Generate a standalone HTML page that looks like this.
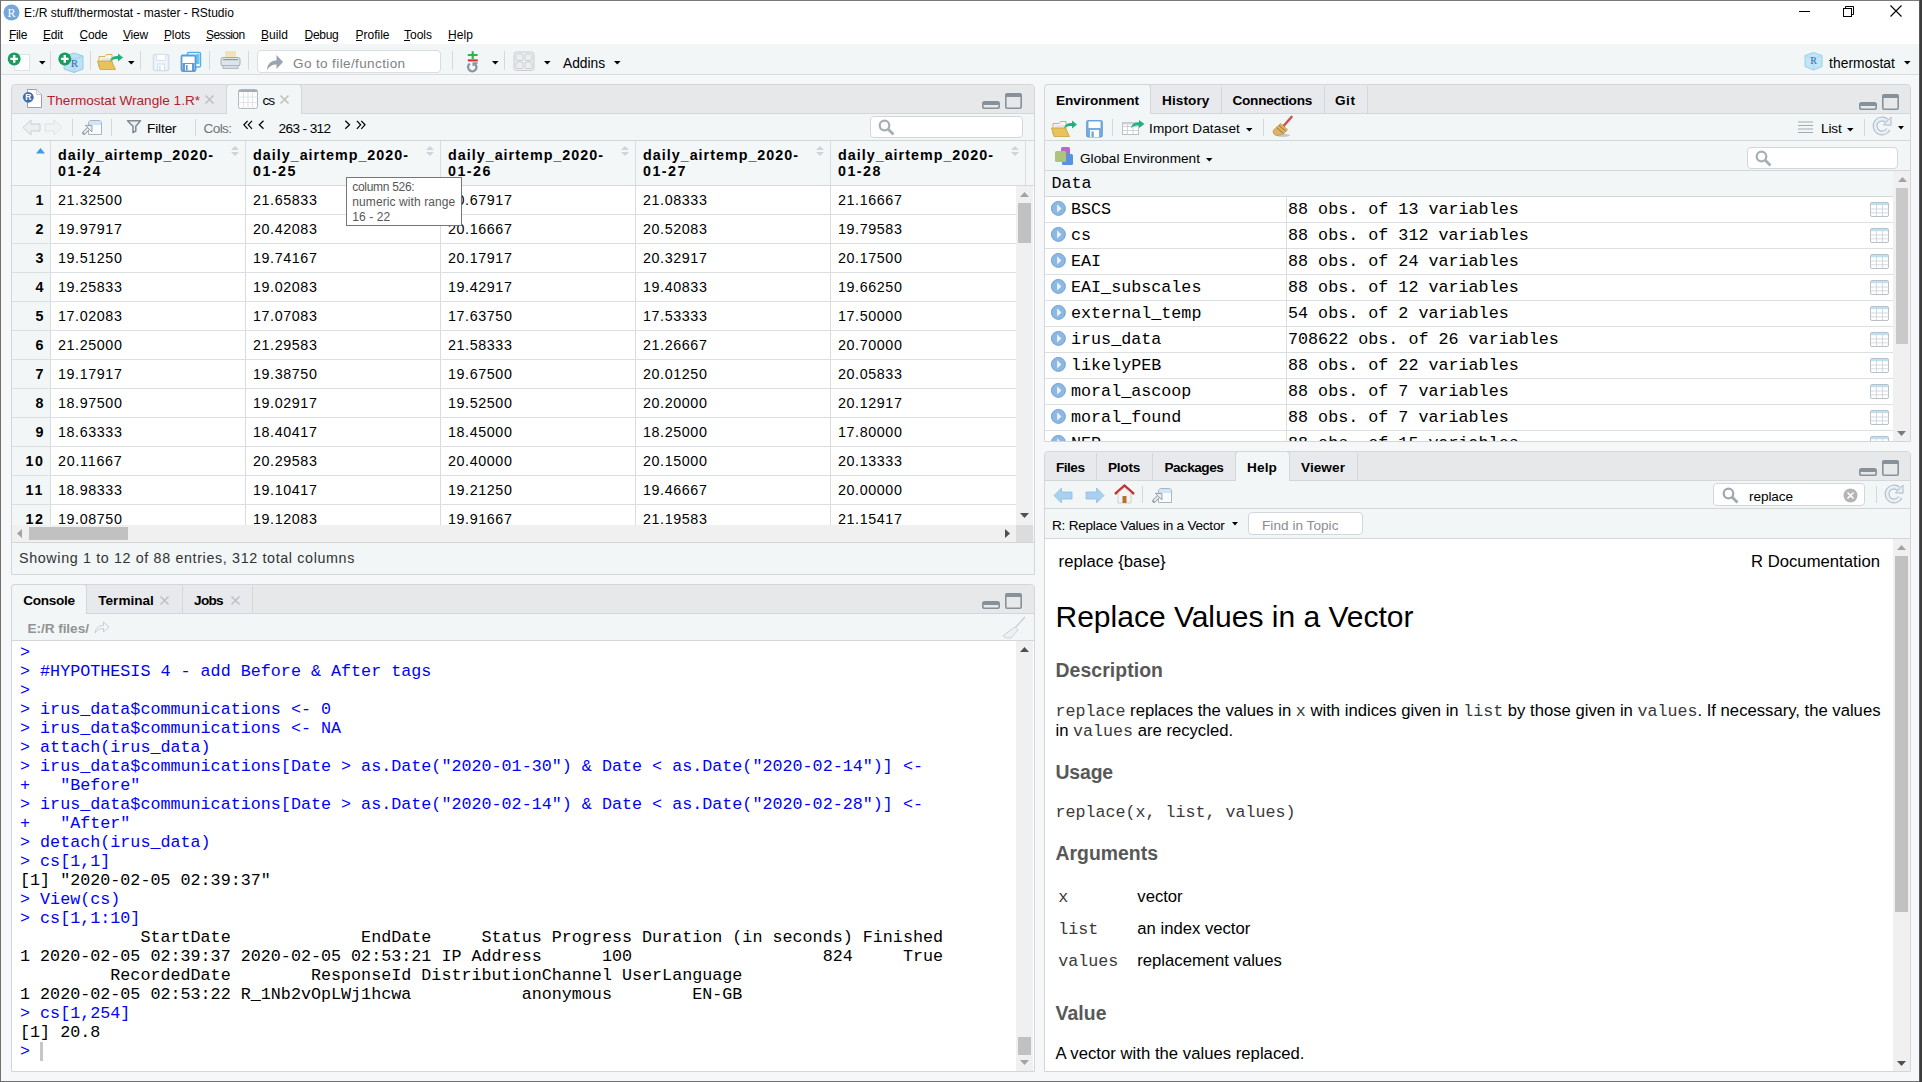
<!DOCTYPE html>
<html><head><meta charset="utf-8"><title>RStudio</title>
<style>
html,body{margin:0;padding:0;width:1922px;height:1082px;overflow:hidden;background:#fff;}
body{position:relative;font-family:"Liberation Sans",sans-serif;}
body div{position:absolute;box-sizing:border-box;}
.t{white-space:pre;}
svg{position:absolute;overflow:visible;}

</style></head><body>
<div style="left:0px;top:0px;width:1922px;height:1082px;background:#f5f7f8"></div>
<div style="left:0px;top:0px;width:1922px;height:44px;background:#fff"></div>
<div class="t" style="left:24.00px;top:5.84px;font-family:'Liberation Sans';font-size:12px;line-height:14px;color:#000;">E:/R stuff/thermostat - master - RStudio</div>
<svg style="left:3px;top:4px" width="17" height="17" viewBox="0 0 17 17"><circle cx="8.5" cy="8.5" r="8" fill="#75a7d8"/><text x="8.5" y="12.6" text-anchor="middle" font-family="Liberation Serif" font-size="12" fill="#fff">R</text></svg>
<div style="left:1799px;top:11px;width:11px;height:1px;background:#000"></div>
<svg style="left:1843px;top:6px" width="13" height="11" viewBox="0 0 13 11"><rect x="0.5" y="2.5" width="8" height="8" fill="none" stroke="#000"/><path d="M2.5 2.5V0.5H10.5V8.5H8.5" fill="none" stroke="#000"/></svg>
<svg style="left:1890px;top:5px" width="12" height="12" viewBox="0 0 12 12"><path d="M0.5 0.5L11.5 11.5M11.5 0.5L0.5 11.5" stroke="#000" stroke-width="1.1"/></svg>
<div class="t" style="left:9.00px;top:27.84px;font-family:'Liberation Sans';font-size:12px;line-height:14px;color:#000;letter-spacing:-0.336px;">File</div>
<div style="left:9px;top:40px;width:6px;height:1px;background:#000"></div>
<div class="t" style="left:43.00px;top:27.84px;font-family:'Liberation Sans';font-size:12px;line-height:14px;color:#000;letter-spacing:-0.172px;">Edit</div>
<div style="left:43px;top:40px;width:6px;height:1px;background:#000"></div>
<div class="t" style="left:79.50px;top:27.84px;font-family:'Liberation Sans';font-size:12px;line-height:14px;color:#000;letter-spacing:-0.172px;">Code</div>
<div style="left:79.5px;top:40px;width:7px;height:1px;background:#000"></div>
<div class="t" style="left:123.00px;top:27.84px;font-family:'Liberation Sans';font-size:12px;line-height:14px;color:#000;letter-spacing:-0.199px;">View</div>
<div style="left:123px;top:40px;width:6px;height:1px;background:#000"></div>
<div class="t" style="left:164.00px;top:27.84px;font-family:'Liberation Sans';font-size:12px;line-height:14px;color:#000;letter-spacing:-0.138px;">Plots</div>
<div style="left:164px;top:40px;width:6px;height:1px;background:#000"></div>
<div class="t" style="left:206.00px;top:27.84px;font-family:'Liberation Sans';font-size:12px;line-height:14px;color:#000;letter-spacing:-0.600px;">Session</div>
<div style="left:206px;top:40px;width:6px;height:1px;background:#000"></div>
<div class="t" style="left:261.00px;top:27.84px;font-family:'Liberation Sans';font-size:12px;line-height:14px;color:#000;letter-spacing:0.062px;">Build</div>
<div style="left:261px;top:40px;width:7px;height:1px;background:#000"></div>
<div class="t" style="left:304.50px;top:27.84px;font-family:'Liberation Sans';font-size:12px;line-height:14px;color:#000;letter-spacing:-0.275px;">Debug</div>
<div style="left:304.5px;top:40px;width:7px;height:1px;background:#000"></div>
<div class="t" style="left:355.50px;top:27.84px;font-family:'Liberation Sans';font-size:12px;line-height:14px;color:#000;">Profile</div>
<div style="left:355.5px;top:40px;width:6px;height:1px;background:#000"></div>
<div class="t" style="left:404.00px;top:27.84px;font-family:'Liberation Sans';font-size:12px;line-height:14px;color:#000;">Tools</div>
<div style="left:404px;top:40px;width:6px;height:1px;background:#000"></div>
<div class="t" style="left:448.00px;top:27.84px;font-family:'Liberation Sans';font-size:12px;line-height:14px;color:#000;letter-spacing:0.078px;">Help</div>
<div style="left:448px;top:40px;width:7px;height:1px;background:#000"></div>
<div style="left:0px;top:44px;width:1922px;height:30px;background:#f2f6f7"></div>
<div style="left:0px;top:74px;width:1922px;height:1px;background:#d8dcdf"></div>
<div style="left:50px;top:51px;width:1px;height:19px;background:#d5d9dc"></div>
<div style="left:90px;top:51px;width:1px;height:19px;background:#d5d9dc"></div>
<div style="left:140px;top:51px;width:1px;height:19px;background:#d5d9dc"></div>
<div style="left:209px;top:51px;width:1px;height:19px;background:#d5d9dc"></div>
<div style="left:248px;top:51px;width:1px;height:19px;background:#d5d9dc"></div>
<div style="left:452px;top:51px;width:1px;height:19px;background:#d5d9dc"></div>
<div style="left:504px;top:51px;width:1px;height:19px;background:#d5d9dc"></div>
<svg style="left:7px;top:51px" width="25" height="22" viewBox="0 0 25 22"><rect x="7.5" y="3.5" width="15" height="16" fill="#fff" stroke="#dfe3e8"/><circle cx="7.2" cy="7.9" r="6.5" fill="#14a05c"/><path d="M3.4000000000000004 7.9H11.0M7.2 4.1000000000000005V11.7" stroke="#fff" stroke-width="2.4"/></svg>
<svg style="left:38.5px;top:60.5px" width="6.6" height="3.6" viewBox="0 0 6.6 3.6"><path d="M0 0H6.6L3.3 3.6Z" fill="#000"/></svg>
<svg style="left:57px;top:51px" width="28" height="23" viewBox="0 0 28 23"><path d="M7 5L17 2L26 5V18L17 21.5L7 18Z" fill="#bfe0f5" stroke="#7fc4e8" stroke-width="0.8"/><path d="M7 5L17 8.5L26 5M17 8.5V21.5" fill="none" stroke="#8fcbea" stroke-width="0.7"/><text x="17.5" y="16" text-anchor="middle" font-family="Liberation Serif" font-size="11" fill="#2d6fb8">R</text><circle cx="7.8" cy="7.9" r="6.5" fill="#14a05c"/><path d="M4.0 7.9H11.6M7.8 4.1000000000000005V11.7" stroke="#fff" stroke-width="2.4"/></svg>
<svg style="left:97px;top:52px" width="28" height="19" viewBox="0 0 28 19"><path d="M2 4.5H8L9.5 2.5H15V15H2Z" fill="#f6f6f6" stroke="#d2aa3e" stroke-width="0.9"/><path d="M4 6H14V15H4Z" fill="#e6e6e6"/><path d="M0.5 9H14.5L18.5 17.5H3Z" fill="#e8c25a" stroke="#c9a23a" stroke-width="0.8"/><path d="M13 9.5C14 5 17 4 21 4V1.5L26 5.5L21 9.5V7C17.5 7 15 7.5 13 9.5Z" fill="#1fb17f"/></svg>
<svg style="left:128px;top:60.5px" width="6.6" height="3.6" viewBox="0 0 6.6 3.6"><path d="M0 0H6.6L3.3 3.6Z" fill="#000"/></svg>
<svg style="left:152px;top:53px" width="18" height="18" viewBox="0 0 18 18"><rect x="1.5" y="1.5" width="15" height="16" rx="1.5" fill="#f2f6fa" stroke="#d0e0ef" stroke-width="1.6"/><rect x="4.5" y="1.5" width="9" height="6" fill="#fff" stroke="#d6e4f0"/><rect x="5.5" y="11" width="7" height="6.5" fill="#fff" stroke="#d0e0ef"/><rect x="7" y="12.5" width="1.6" height="5" fill="#d0e0ef"/></svg>
<svg style="left:180px;top:51px" width="23" height="21" viewBox="0 0 23 21"><rect x="7.5" y="1.5" width="13" height="14.5" rx="1.2" fill="#fff" stroke="#4bb4e6" stroke-width="1.4"/><rect x="16" y="3" width="3.5" height="10" fill="#6cc4ee"/><rect x="1.5" y="4.5" width="14" height="15.5" rx="1.2" fill="#fff" stroke="#5b9bd8" stroke-width="1.8"/><rect x="2.5" y="12" width="12" height="7.5" fill="#5b9bd8"/><rect x="5" y="13" width="7" height="6.5" fill="#fff"/><rect x="6" y="14" width="1.6" height="5.5" fill="#5b9bd8"/></svg>
<svg style="left:220px;top:50px" width="21" height="20" viewBox="0 0 21 20"><rect x="5" y="1" width="11" height="10" fill="#f1e3b8"/><rect x="1" y="7.5" width="19" height="8.5" rx="2" fill="#dfe4ea" stroke="#9aa5b1" stroke-width="0.9"/><rect x="3" y="9" width="15" height="1.2" fill="#8c98a5"/><rect x="3" y="15.5" width="15" height="3" fill="#d7dde4" stroke="#a7b0ba" stroke-width="0.8"/></svg>
<div style="left:257px;top:50px;width:184px;height:23px;background:#fff;border:1px solid #d9dde0;border-radius:4px"></div>
<svg style="left:266px;top:54px" width="18" height="17" viewBox="0 0 18 17"><path d="M1 16C1.5 9 5.5 6.5 10.5 6.5V1L17 8L10.5 15V10.5C6 10.5 3 12.5 1 16Z" fill="#9aa4ae"/></svg>
<div class="t" style="left:293.00px;top:55.82px;font-family:'Liberation Sans';font-size:13.5px;line-height:16px;color:#808285;letter-spacing:0.391px;">Go to file/function</div>
<svg style="left:466px;top:50px" width="13" height="23" viewBox="0 0 13 23"><path d="M1.8 5H11.6M6.7 1.2V9" stroke="#2fb34a" stroke-width="2.1"/><rect x="1.8" y="9.4" width="10" height="2" fill="#dd2a22"/><path d="M3.9 13.6A4.2 4.2 0 1 0 8.7 13.7" fill="none" stroke="#8896a3" stroke-width="2.3"/><path d="M6.5 12.3H11.8L11.3 14H8.4V16H6.5Z" fill="#8896a3"/></svg>
<svg style="left:491.5px;top:61px" width="6.6" height="3.6" viewBox="0 0 6.6 3.6"><path d="M0 0H6.6L3.3 3.6Z" fill="#000"/></svg>
<svg style="left:513px;top:51px" width="22" height="20" viewBox="0 0 22 20"><rect x="1" y="1" width="20" height="18.5" rx="2.5" fill="#eef0f2" stroke="#c8ccd0"/><rect x="3" y="3" width="7" height="6.5" rx="1" fill="#eceef0" stroke="#c4c8cc" stroke-width="0.8"/><rect x="12" y="3" width="7" height="6.5" rx="1" fill="#eceef0" stroke="#c4c8cc" stroke-width="0.8"/><rect x="3" y="11" width="7" height="6.5" rx="1" fill="#eceef0" stroke="#c4c8cc" stroke-width="0.8"/><rect x="12" y="11" width="7" height="6.5" rx="1" fill="#eceef0" stroke="#c4c8cc" stroke-width="0.8"/></svg>
<svg style="left:543.5px;top:61px" width="6.6" height="3.6" viewBox="0 0 6.6 3.6"><path d="M0 0H6.6L3.3 3.6Z" fill="#000"/></svg>
<div class="t" style="left:563.00px;top:54.72px;font-family:'Liberation Sans';font-size:13.8px;line-height:17px;color:#000;letter-spacing:-0.031px;">Addins</div>
<svg style="left:613.5px;top:61px" width="6.6" height="3.6" viewBox="0 0 6.6 3.6"><path d="M0 0H6.6L3.3 3.6Z" fill="#000"/></svg>
<svg style="left:1803px;top:51px" width="21" height="20" viewBox="0 0 21 20"><path d="M2 4.5L10.5 1.5L19 4.5V15.5L10.5 19L2 15.5Z" fill="#c5e4f6" stroke="#86c8ea" stroke-width="0.8"/><path d="M2 4.5L10.5 7.5L19 4.5M10.5 7.5V19" fill="none" stroke="#9ad2ee" stroke-width="0.6"/><text x="10.5" y="12.5" text-anchor="middle" font-family="Liberation Serif" font-size="10" fill="#2d6fb8">R</text></svg>
<div class="t" style="left:1829.00px;top:54.72px;font-family:'Liberation Sans';font-size:13.8px;line-height:17px;color:#000;letter-spacing:0.081px;">thermostat</div>
<svg style="left:1904px;top:61px" width="6.6" height="3.6" viewBox="0 0 6.6 3.6"><path d="M0 0H6.6L3.3 3.6Z" fill="#000"/></svg>
<div style="left:11px;top:84px;width:1024px;height:491px;background:#f2f6f7;border:1px solid #d3d7da;border-radius:4px 4px 0 0"></div>
<div style="left:12px;top:85px;width:1022px;height:28px;background:#e6e8ea;border-radius:3px 3px 0 0"></div>
<div style="left:12px;top:113px;width:1022px;height:1px;background:#d3d7da"></div>
<div style="left:13px;top:85px;width:213px;height:28px;background:#e8e9ec;border-radius:3px 3px 0 0"></div>
<div style="left:226px;top:86px;width:1px;height:27px;background:#d3d7da"></div>
<div style="left:226px;top:84px;width:76px;height:30px;background:#f2f6f7;border:1px solid #d3d7da;border-bottom:none;border-radius:4px 4px 0 0"></div>
<svg style="left:22px;top:88px" width="21" height="21" viewBox="0 0 21 21"><path d="M5.5 1.5H14.5L19.5 6.5V19.5H5.5Z" fill="#fff" stroke="#8e969d" stroke-width="0.9"/><path d="M14.5 1.5V6.5H19.5" fill="#eef0f2" stroke="#b9bfc5" stroke-width="0.8"/><circle cx="6.3" cy="9.3" r="5.4" fill="#3f6fae"/><text x="6.3" y="12.4" text-anchor="middle" font-family="Liberation Sans" font-weight="700" font-size="8.5" fill="#fff">R</text></svg>
<div class="t" style="left:47.00px;top:92.99px;font-family:'Liberation Sans';font-size:13.6px;line-height:16px;color:#b0232a;letter-spacing:-0.005px;">Thermostat Wrangle 1.R*</div>
<svg style="left:205px;top:94.8px" width="9" height="9" viewBox="0 0 9 9"><path d="M0.5 0.5L8.5 8.5M8.5 0.5L0.5 8.5" stroke="#c0c0c0" stroke-width="1.6"/></svg>
<svg style="left:238px;top:89px" width="20" height="20" viewBox="0 0 20 20"><rect x="0.5" y="0.5" width="19" height="19" rx="2" fill="#fdfdfe" stroke="#aeb6be"/><rect x="1" y="1" width="18" height="2" fill="#a3acb5"/><path d="M5.5 3V19.5M10 3V19.5M14.5 3V19.5M0.5 8H19.5M0.5 13.5H19.5" stroke="#dde2e7" stroke-width="0.9"/></svg>
<div class="t" style="left:262.50px;top:92.99px;font-family:'Liberation Sans';font-size:13.6px;line-height:16px;color:#000;letter-spacing:-1.047px;">cs</div>
<svg style="left:280px;top:94.8px" width="9" height="9" viewBox="0 0 9 9"><path d="M0.5 0.5L8.5 8.5M8.5 0.5L0.5 8.5" stroke="#c0c0c0" stroke-width="1.6"/></svg>
<svg style="left:982px;top:101px" width="18" height="8" viewBox="0 0 18 8"><rect x="0.8" y="0.8" width="16.4" height="6.4" rx="1.8" fill="none" stroke="#87919a" stroke-width="1.6"/><rect x="0.8" y="0.8" width="16.4" height="3.2" rx="1.5" fill="#87919a"/></svg>
<svg style="left:1005px;top:93px" width="17" height="16" viewBox="0 0 17 16"><rect x="0.8" y="0.8" width="15.4" height="14.4" rx="1.2" fill="none" stroke="#87919a" stroke-width="1.6"/><rect x="0.8" y="0.8" width="15.4" height="3.2" rx="1" fill="#87919a"/></svg>
<div style="left:12px;top:140px;width:1022px;height:1px;background:#d3d7da"></div>
<svg style="left:22px;top:119px" width="42" height="18" viewBox="0 0 42 18"><path d="M1 8.5L9 1V5H18V12H9V16Z" fill="#eceef0" stroke="#c6cbd0" stroke-width="0.9"/><path d="M40 8.5L32 1V5H23V12H32V16Z" fill="#f0f2f4" stroke="#dde1e4" stroke-width="0.9"/></svg>
<div style="left:72px;top:119px;width:1px;height:17px;background:#d3d7da"></div>
<svg style="left:82px;top:119px" width="21" height="17" viewBox="0 0 21 17"><path d="M6.5 15.5V4A2.5 2.5 0 0 1 9 1.5H17A2.5 2.5 0 0 1 19.5 4V15.5Z" fill="#f8fafc" stroke="#a9b6c1"/><path d="M7 6V4A2 2 0 0 1 9 2H17A2 2 0 0 1 19 4V6Z" fill="#cfe5f9"/><path d="M2 14L7.5 8.5" stroke="#8a98a6" stroke-width="3.8" stroke-linecap="round"/><path d="M2 14L7.5 8.5" stroke="#ececf1" stroke-width="2"/><path d="M3.4 6.4H9.9V12.9Z" fill="#ececf1" stroke="#8a98a6" stroke-width="0.9" stroke-linejoin="round"/></svg>
<div style="left:111px;top:119px;width:1px;height:17px;background:#d3d7da"></div>
<svg style="left:126px;top:119px" width="16" height="15" viewBox="0 0 16 15"><path d="M1.5 1.8H14.5L9.8 7.3V12L7 13.6V7.3Z" fill="#eef0f3" stroke="#7f8b95" stroke-width="1.5" stroke-linejoin="round"/></svg>
<div class="t" style="left:147.00px;top:120.79px;font-family:'Liberation Sans';font-size:13.6px;line-height:16px;color:#000;letter-spacing:-0.120px;">Filter</div>
<div style="left:194.5px;top:119px;width:1px;height:17px;background:#d3d7da"></div>
<div class="t" style="left:203.50px;top:120.79px;font-family:'Liberation Sans';font-size:13.6px;line-height:16px;color:#6f7478;letter-spacing:-0.597px;">Cols:</div>
<svg style="left:243px;top:119.8px" width="10" height="10" viewBox="0 0 10 10"><path d="M4.6 0.8L0.9 4.8L4.6 8.8M9 0.8L5.3 4.8L9 8.8" fill="none" stroke="#000" stroke-width="1.25"/></svg>
<svg style="left:258px;top:119.8px" width="7" height="10" viewBox="0 0 7 10"><path d="M5.5 0.8L1.3 4.8L5.5 8.8" fill="none" stroke="#000" stroke-width="1.25"/></svg>
<div class="t" style="left:278.50px;top:120.79px;font-family:'Liberation Sans';font-size:13.6px;line-height:16px;color:#000;letter-spacing:-0.606px;">263 - 312</div>
<svg style="left:344px;top:119.8px" width="7" height="10" viewBox="0 0 7 10"><path d="M1.3 0.8L5.5 4.8L1.3 8.8" fill="none" stroke="#000" stroke-width="1.25"/></svg>
<svg style="left:355.5px;top:119.8px" width="10" height="10" viewBox="0 0 10 10"><path d="M0.9 0.8L4.6 4.8L0.9 8.8M5.3 0.8L9 4.8L5.3 8.8" fill="none" stroke="#000" stroke-width="1.25"/></svg>
<div style="left:870px;top:116px;width:153px;height:22px;background:#fff;border:1px solid #d3d7da;border-radius:4px"></div>
<svg style="left:878px;top:119px" width="18" height="18" viewBox="0 0 18 18"><circle cx="6.5" cy="6.5" r="4.8" fill="none" stroke="#a7afb6" stroke-width="2.2"/><path d="M10 10L15.5 15.5" stroke="#a7afb6" stroke-width="2.8"/></svg>
<div style="left:12px;top:141px;width:1022px;height:384px;background:#fff"></div>
<div style="left:12px;top:141px;width:1022px;height:44px;background:#f4f7f8"></div>
<div style="left:12px;top:186px;width:38px;height:339px;background:#f2f6f7"></div>
<div style="left:12px;top:185px;width:1022px;height:1px;background:#d5d9dc"></div>
<div style="left:50px;top:141px;width:1px;height:384px;background:#dadde0"></div>
<div style="left:245px;top:141px;width:1px;height:384px;background:#dadde0"></div>
<div style="left:440px;top:141px;width:1px;height:384px;background:#dadde0"></div>
<div style="left:635px;top:141px;width:1px;height:384px;background:#dadde0"></div>
<div style="left:830px;top:141px;width:1px;height:384px;background:#dadde0"></div>
<div style="left:1025px;top:141px;width:1px;height:384px;background:#dadde0"></div>
<div style="left:12px;top:214px;width:1004px;height:1px;background:#dcdfe1"></div>
<div style="left:12px;top:243px;width:1004px;height:1px;background:#dcdfe1"></div>
<div style="left:12px;top:272px;width:1004px;height:1px;background:#dcdfe1"></div>
<div style="left:12px;top:301px;width:1004px;height:1px;background:#dcdfe1"></div>
<div style="left:12px;top:330px;width:1004px;height:1px;background:#dcdfe1"></div>
<div style="left:12px;top:359px;width:1004px;height:1px;background:#dcdfe1"></div>
<div style="left:12px;top:388px;width:1004px;height:1px;background:#dcdfe1"></div>
<div style="left:12px;top:417px;width:1004px;height:1px;background:#dcdfe1"></div>
<div style="left:12px;top:446px;width:1004px;height:1px;background:#dcdfe1"></div>
<div style="left:12px;top:475px;width:1004px;height:1px;background:#dcdfe1"></div>
<div style="left:12px;top:504px;width:1004px;height:1px;background:#dcdfe1"></div>
<div class="t" style="left:58.00px;top:146.54px;font-family:'Liberation Sans';font-size:14.3px;line-height:17px;color:#000;font-weight:700;letter-spacing:1.016px;">daily_airtemp_2020-</div>
<div class="t" style="left:58.00px;top:162.54px;font-family:'Liberation Sans';font-size:14.3px;line-height:17px;color:#000;font-weight:700;letter-spacing:1.484px;">01-24</div>
<svg style="left:231px;top:146px" width="8" height="11" viewBox="0 0 8 11"><path d="M0 4H8L4 0Z M0 6H8L4 10Z" fill="#d0d4d8"/></svg>
<div class="t" style="left:253.00px;top:146.54px;font-family:'Liberation Sans';font-size:14.3px;line-height:17px;color:#000;font-weight:700;letter-spacing:1.016px;">daily_airtemp_2020-</div>
<div class="t" style="left:253.00px;top:162.54px;font-family:'Liberation Sans';font-size:14.3px;line-height:17px;color:#000;font-weight:700;letter-spacing:1.484px;">01-25</div>
<svg style="left:426px;top:146px" width="8" height="11" viewBox="0 0 8 11"><path d="M0 4H8L4 0Z M0 6H8L4 10Z" fill="#d0d4d8"/></svg>
<div class="t" style="left:448.00px;top:146.54px;font-family:'Liberation Sans';font-size:14.3px;line-height:17px;color:#000;font-weight:700;letter-spacing:1.016px;">daily_airtemp_2020-</div>
<div class="t" style="left:448.00px;top:162.54px;font-family:'Liberation Sans';font-size:14.3px;line-height:17px;color:#000;font-weight:700;letter-spacing:1.484px;">01-26</div>
<svg style="left:621px;top:146px" width="8" height="11" viewBox="0 0 8 11"><path d="M0 4H8L4 0Z M0 6H8L4 10Z" fill="#d0d4d8"/></svg>
<div class="t" style="left:643.00px;top:146.54px;font-family:'Liberation Sans';font-size:14.3px;line-height:17px;color:#000;font-weight:700;letter-spacing:1.016px;">daily_airtemp_2020-</div>
<div class="t" style="left:643.00px;top:162.54px;font-family:'Liberation Sans';font-size:14.3px;line-height:17px;color:#000;font-weight:700;letter-spacing:1.484px;">01-27</div>
<svg style="left:816px;top:146px" width="8" height="11" viewBox="0 0 8 11"><path d="M0 4H8L4 0Z M0 6H8L4 10Z" fill="#d0d4d8"/></svg>
<div class="t" style="left:838.00px;top:146.54px;font-family:'Liberation Sans';font-size:14.3px;line-height:17px;color:#000;font-weight:700;letter-spacing:1.016px;">daily_airtemp_2020-</div>
<div class="t" style="left:838.00px;top:162.54px;font-family:'Liberation Sans';font-size:14.3px;line-height:17px;color:#000;font-weight:700;letter-spacing:1.484px;">01-28</div>
<svg style="left:1011px;top:146px" width="8" height="11" viewBox="0 0 8 11"><path d="M0 4H8L4 0Z M0 6H8L4 10Z" fill="#d0d4d8"/></svg>
<svg style="left:36px;top:148px" width="9" height="6" viewBox="0 0 9 6"><path d="M0 5.5H9L4.5 0Z" fill="#3d9be9"/></svg>
<div class="t" style="right:1877.50px;top:191.54px;font-family:'Liberation Sans';font-size:14.3px;line-height:17px;color:#000;font-weight:700;letter-spacing:1.047px;">1</div>
<div class="t" style="left:58.00px;top:191.54px;font-family:'Liberation Sans';font-size:14.3px;line-height:17px;color:#000;letter-spacing:0.607px;">21.32500</div>
<div class="t" style="left:253.00px;top:191.54px;font-family:'Liberation Sans';font-size:14.3px;line-height:17px;color:#000;letter-spacing:0.607px;">21.65833</div>
<div class="t" style="left:448.00px;top:191.54px;font-family:'Liberation Sans';font-size:14.3px;line-height:17px;color:#000;letter-spacing:0.607px;">20.67917</div>
<div class="t" style="left:643.00px;top:191.54px;font-family:'Liberation Sans';font-size:14.3px;line-height:17px;color:#000;letter-spacing:0.607px;">21.08333</div>
<div class="t" style="left:838.00px;top:191.54px;font-family:'Liberation Sans';font-size:14.3px;line-height:17px;color:#000;letter-spacing:0.607px;">21.16667</div>
<div class="t" style="right:1877.50px;top:220.54px;font-family:'Liberation Sans';font-size:14.3px;line-height:17px;color:#000;font-weight:700;letter-spacing:1.047px;">2</div>
<div class="t" style="left:58.00px;top:220.54px;font-family:'Liberation Sans';font-size:14.3px;line-height:17px;color:#000;letter-spacing:0.607px;">19.97917</div>
<div class="t" style="left:253.00px;top:220.54px;font-family:'Liberation Sans';font-size:14.3px;line-height:17px;color:#000;letter-spacing:0.607px;">20.42083</div>
<div class="t" style="left:448.00px;top:220.54px;font-family:'Liberation Sans';font-size:14.3px;line-height:17px;color:#000;letter-spacing:0.607px;">20.16667</div>
<div class="t" style="left:643.00px;top:220.54px;font-family:'Liberation Sans';font-size:14.3px;line-height:17px;color:#000;letter-spacing:0.607px;">20.52083</div>
<div class="t" style="left:838.00px;top:220.54px;font-family:'Liberation Sans';font-size:14.3px;line-height:17px;color:#000;letter-spacing:0.607px;">19.79583</div>
<div class="t" style="right:1877.50px;top:249.54px;font-family:'Liberation Sans';font-size:14.3px;line-height:17px;color:#000;font-weight:700;letter-spacing:1.047px;">3</div>
<div class="t" style="left:58.00px;top:249.54px;font-family:'Liberation Sans';font-size:14.3px;line-height:17px;color:#000;letter-spacing:0.607px;">19.51250</div>
<div class="t" style="left:253.00px;top:249.54px;font-family:'Liberation Sans';font-size:14.3px;line-height:17px;color:#000;letter-spacing:0.607px;">19.74167</div>
<div class="t" style="left:448.00px;top:249.54px;font-family:'Liberation Sans';font-size:14.3px;line-height:17px;color:#000;letter-spacing:0.607px;">20.17917</div>
<div class="t" style="left:643.00px;top:249.54px;font-family:'Liberation Sans';font-size:14.3px;line-height:17px;color:#000;letter-spacing:0.607px;">20.32917</div>
<div class="t" style="left:838.00px;top:249.54px;font-family:'Liberation Sans';font-size:14.3px;line-height:17px;color:#000;letter-spacing:0.607px;">20.17500</div>
<div class="t" style="right:1877.50px;top:278.54px;font-family:'Liberation Sans';font-size:14.3px;line-height:17px;color:#000;font-weight:700;letter-spacing:1.047px;">4</div>
<div class="t" style="left:58.00px;top:278.54px;font-family:'Liberation Sans';font-size:14.3px;line-height:17px;color:#000;letter-spacing:0.607px;">19.25833</div>
<div class="t" style="left:253.00px;top:278.54px;font-family:'Liberation Sans';font-size:14.3px;line-height:17px;color:#000;letter-spacing:0.607px;">19.02083</div>
<div class="t" style="left:448.00px;top:278.54px;font-family:'Liberation Sans';font-size:14.3px;line-height:17px;color:#000;letter-spacing:0.607px;">19.42917</div>
<div class="t" style="left:643.00px;top:278.54px;font-family:'Liberation Sans';font-size:14.3px;line-height:17px;color:#000;letter-spacing:0.607px;">19.40833</div>
<div class="t" style="left:838.00px;top:278.54px;font-family:'Liberation Sans';font-size:14.3px;line-height:17px;color:#000;letter-spacing:0.607px;">19.66250</div>
<div class="t" style="right:1877.50px;top:307.54px;font-family:'Liberation Sans';font-size:14.3px;line-height:17px;color:#000;font-weight:700;letter-spacing:1.047px;">5</div>
<div class="t" style="left:58.00px;top:307.54px;font-family:'Liberation Sans';font-size:14.3px;line-height:17px;color:#000;letter-spacing:0.607px;">17.02083</div>
<div class="t" style="left:253.00px;top:307.54px;font-family:'Liberation Sans';font-size:14.3px;line-height:17px;color:#000;letter-spacing:0.607px;">17.07083</div>
<div class="t" style="left:448.00px;top:307.54px;font-family:'Liberation Sans';font-size:14.3px;line-height:17px;color:#000;letter-spacing:0.607px;">17.63750</div>
<div class="t" style="left:643.00px;top:307.54px;font-family:'Liberation Sans';font-size:14.3px;line-height:17px;color:#000;letter-spacing:0.607px;">17.53333</div>
<div class="t" style="left:838.00px;top:307.54px;font-family:'Liberation Sans';font-size:14.3px;line-height:17px;color:#000;letter-spacing:0.607px;">17.50000</div>
<div class="t" style="right:1877.50px;top:336.54px;font-family:'Liberation Sans';font-size:14.3px;line-height:17px;color:#000;font-weight:700;letter-spacing:1.047px;">6</div>
<div class="t" style="left:58.00px;top:336.54px;font-family:'Liberation Sans';font-size:14.3px;line-height:17px;color:#000;letter-spacing:0.607px;">21.25000</div>
<div class="t" style="left:253.00px;top:336.54px;font-family:'Liberation Sans';font-size:14.3px;line-height:17px;color:#000;letter-spacing:0.607px;">21.29583</div>
<div class="t" style="left:448.00px;top:336.54px;font-family:'Liberation Sans';font-size:14.3px;line-height:17px;color:#000;letter-spacing:0.607px;">21.58333</div>
<div class="t" style="left:643.00px;top:336.54px;font-family:'Liberation Sans';font-size:14.3px;line-height:17px;color:#000;letter-spacing:0.607px;">21.26667</div>
<div class="t" style="left:838.00px;top:336.54px;font-family:'Liberation Sans';font-size:14.3px;line-height:17px;color:#000;letter-spacing:0.607px;">20.70000</div>
<div class="t" style="right:1877.50px;top:365.54px;font-family:'Liberation Sans';font-size:14.3px;line-height:17px;color:#000;font-weight:700;letter-spacing:1.047px;">7</div>
<div class="t" style="left:58.00px;top:365.54px;font-family:'Liberation Sans';font-size:14.3px;line-height:17px;color:#000;letter-spacing:0.607px;">19.17917</div>
<div class="t" style="left:253.00px;top:365.54px;font-family:'Liberation Sans';font-size:14.3px;line-height:17px;color:#000;letter-spacing:0.607px;">19.38750</div>
<div class="t" style="left:448.00px;top:365.54px;font-family:'Liberation Sans';font-size:14.3px;line-height:17px;color:#000;letter-spacing:0.607px;">19.67500</div>
<div class="t" style="left:643.00px;top:365.54px;font-family:'Liberation Sans';font-size:14.3px;line-height:17px;color:#000;letter-spacing:0.607px;">20.01250</div>
<div class="t" style="left:838.00px;top:365.54px;font-family:'Liberation Sans';font-size:14.3px;line-height:17px;color:#000;letter-spacing:0.607px;">20.05833</div>
<div class="t" style="right:1877.50px;top:394.54px;font-family:'Liberation Sans';font-size:14.3px;line-height:17px;color:#000;font-weight:700;letter-spacing:1.047px;">8</div>
<div class="t" style="left:58.00px;top:394.54px;font-family:'Liberation Sans';font-size:14.3px;line-height:17px;color:#000;letter-spacing:0.607px;">18.97500</div>
<div class="t" style="left:253.00px;top:394.54px;font-family:'Liberation Sans';font-size:14.3px;line-height:17px;color:#000;letter-spacing:0.607px;">19.02917</div>
<div class="t" style="left:448.00px;top:394.54px;font-family:'Liberation Sans';font-size:14.3px;line-height:17px;color:#000;letter-spacing:0.607px;">19.52500</div>
<div class="t" style="left:643.00px;top:394.54px;font-family:'Liberation Sans';font-size:14.3px;line-height:17px;color:#000;letter-spacing:0.607px;">20.20000</div>
<div class="t" style="left:838.00px;top:394.54px;font-family:'Liberation Sans';font-size:14.3px;line-height:17px;color:#000;letter-spacing:0.607px;">20.12917</div>
<div class="t" style="right:1877.50px;top:423.54px;font-family:'Liberation Sans';font-size:14.3px;line-height:17px;color:#000;font-weight:700;letter-spacing:1.047px;">9</div>
<div class="t" style="left:58.00px;top:423.54px;font-family:'Liberation Sans';font-size:14.3px;line-height:17px;color:#000;letter-spacing:0.607px;">18.63333</div>
<div class="t" style="left:253.00px;top:423.54px;font-family:'Liberation Sans';font-size:14.3px;line-height:17px;color:#000;letter-spacing:0.607px;">18.40417</div>
<div class="t" style="left:448.00px;top:423.54px;font-family:'Liberation Sans';font-size:14.3px;line-height:17px;color:#000;letter-spacing:0.607px;">18.45000</div>
<div class="t" style="left:643.00px;top:423.54px;font-family:'Liberation Sans';font-size:14.3px;line-height:17px;color:#000;letter-spacing:0.607px;">18.25000</div>
<div class="t" style="left:838.00px;top:423.54px;font-family:'Liberation Sans';font-size:14.3px;line-height:17px;color:#000;letter-spacing:0.607px;">17.80000</div>
<div class="t" style="right:1877.50px;top:452.54px;font-family:'Liberation Sans';font-size:14.3px;line-height:17px;color:#000;font-weight:700;letter-spacing:1.547px;">10</div>
<div class="t" style="left:58.00px;top:452.54px;font-family:'Liberation Sans';font-size:14.3px;line-height:17px;color:#000;letter-spacing:0.740px;">20.11667</div>
<div class="t" style="left:253.00px;top:452.54px;font-family:'Liberation Sans';font-size:14.3px;line-height:17px;color:#000;letter-spacing:0.607px;">20.29583</div>
<div class="t" style="left:448.00px;top:452.54px;font-family:'Liberation Sans';font-size:14.3px;line-height:17px;color:#000;letter-spacing:0.607px;">20.40000</div>
<div class="t" style="left:643.00px;top:452.54px;font-family:'Liberation Sans';font-size:14.3px;line-height:17px;color:#000;letter-spacing:0.607px;">20.15000</div>
<div class="t" style="left:838.00px;top:452.54px;font-family:'Liberation Sans';font-size:14.3px;line-height:17px;color:#000;letter-spacing:0.607px;">20.13333</div>
<div class="t" style="right:1877.50px;top:481.54px;font-family:'Liberation Sans';font-size:14.3px;line-height:17px;color:#000;font-weight:700;letter-spacing:1.938px;">11</div>
<div class="t" style="left:58.00px;top:481.54px;font-family:'Liberation Sans';font-size:14.3px;line-height:17px;color:#000;letter-spacing:0.607px;">18.98333</div>
<div class="t" style="left:253.00px;top:481.54px;font-family:'Liberation Sans';font-size:14.3px;line-height:17px;color:#000;letter-spacing:0.607px;">19.10417</div>
<div class="t" style="left:448.00px;top:481.54px;font-family:'Liberation Sans';font-size:14.3px;line-height:17px;color:#000;letter-spacing:0.607px;">19.21250</div>
<div class="t" style="left:643.00px;top:481.54px;font-family:'Liberation Sans';font-size:14.3px;line-height:17px;color:#000;letter-spacing:0.607px;">19.46667</div>
<div class="t" style="left:838.00px;top:481.54px;font-family:'Liberation Sans';font-size:14.3px;line-height:17px;color:#000;letter-spacing:0.607px;">20.00000</div>
<div class="t" style="right:1877.50px;top:510.54px;font-family:'Liberation Sans';font-size:14.3px;line-height:17px;color:#000;font-weight:700;letter-spacing:1.547px;">12</div>
<div class="t" style="left:58.00px;top:510.54px;font-family:'Liberation Sans';font-size:14.3px;line-height:17px;color:#000;letter-spacing:0.607px;">19.08750</div>
<div class="t" style="left:253.00px;top:510.54px;font-family:'Liberation Sans';font-size:14.3px;line-height:17px;color:#000;letter-spacing:0.607px;">19.12083</div>
<div class="t" style="left:448.00px;top:510.54px;font-family:'Liberation Sans';font-size:14.3px;line-height:17px;color:#000;letter-spacing:0.607px;">19.91667</div>
<div class="t" style="left:643.00px;top:510.54px;font-family:'Liberation Sans';font-size:14.3px;line-height:17px;color:#000;letter-spacing:0.607px;">21.19583</div>
<div class="t" style="left:838.00px;top:510.54px;font-family:'Liberation Sans';font-size:14.3px;line-height:17px;color:#000;letter-spacing:0.607px;">21.15417</div>
<div style="left:1016px;top:186px;width:17px;height:339px;background:#f0f0f0"></div>
<svg style="left:1020px;top:192px" width="9" height="5" viewBox="0 0 9 5"><path d="M0 5H9L4.5 0Z" fill="#a3a3a3"/></svg>
<div style="left:1018px;top:203px;width:13px;height:40px;background:#c1c1c1"></div>
<svg style="left:1020px;top:513px" width="9" height="5" viewBox="0 0 9 5"><path d="M0 0H9L4.5 5Z" fill="#505050"/></svg>
<div style="left:12px;top:525px;width:1004px;height:17px;background:#f0f0f0"></div>
<svg style="left:17px;top:529px" width="5" height="9" viewBox="0 0 5 9"><path d="M5 0V9L0 4.5Z" fill="#a3a3a3"/></svg>
<div style="left:29px;top:527px;width:99px;height:13px;background:#c1c1c1"></div>
<svg style="left:1005px;top:529px" width="5" height="9" viewBox="0 0 5 9"><path d="M0 0V9L5 4.5Z" fill="#505050"/></svg>
<div style="left:1016px;top:525px;width:17px;height:17px;background:#dcdcdc"></div>
<div style="left:12px;top:542px;width:1022px;height:1px;background:#d3d7da"></div>
<div class="t" style="left:19.00px;top:549.54px;font-family:'Liberation Sans';font-size:14.3px;line-height:17px;color:#333;letter-spacing:0.642px;">Showing 1 to 12 of 88 entries, 312 total columns</div>
<div style="left:346px;top:177px;width:116px;height:49px;background:#fff;border:1px solid #767676"></div>
<div class="t" style="left:352.30px;top:180.24px;font-family:'Liberation Sans';font-size:12px;line-height:14px;color:#575757;letter-spacing:-0.307px;">column 526:</div>
<div class="t" style="left:352.30px;top:195.14px;font-family:'Liberation Sans';font-size:12px;line-height:14px;color:#575757;letter-spacing:0.089px;">numeric with range</div>
<div class="t" style="left:352.30px;top:210.04px;font-family:'Liberation Sans';font-size:12px;line-height:14px;color:#575757;letter-spacing:0.092px;">16 - 22</div>
<div style="left:11px;top:584px;width:1024px;height:488px;background:#f2f6f7;border:1px solid #d3d7da;border-radius:4px 4px 0 0"></div>
<div style="left:12px;top:585px;width:1022px;height:28px;background:#e6e8ea;border-radius:3px 3px 0 0"></div>
<div style="left:12px;top:613px;width:1022px;height:1px;background:#d3d7da"></div>
<div style="left:11px;top:584px;width:76px;height:30px;background:#f2f6f7;border:1px solid #d3d7da;border-bottom:none;border-radius:4px 4px 0 0"></div>
<div style="left:87px;top:585px;width:95px;height:28px;background:#e8e9ec;border-radius:3px 3px 0 0"></div>
<div style="left:182px;top:586px;width:1px;height:27px;background:#d3d7da"></div>
<div style="left:183px;top:585px;width:69px;height:28px;background:#e8e9ec;border-radius:3px 3px 0 0"></div>
<div style="left:252px;top:586px;width:1px;height:27px;background:#d3d7da"></div>
<div class="t" style="left:23.30px;top:592.99px;font-family:'Liberation Sans';font-size:13.6px;line-height:16px;color:#000;font-weight:700;letter-spacing:-0.304px;">Console</div>
<div class="t" style="left:98.30px;top:592.99px;font-family:'Liberation Sans';font-size:13.6px;line-height:16px;color:#000;font-weight:700;letter-spacing:-0.020px;">Terminal</div>
<svg style="left:160px;top:596px" width="9" height="9" viewBox="0 0 9 9"><path d="M0.5 0.5L8.5 8.5M8.5 0.5L0.5 8.5" stroke="#c0c0c0" stroke-width="1.6"/></svg>
<div class="t" style="left:194.00px;top:592.99px;font-family:'Liberation Sans';font-size:13.6px;line-height:16px;color:#000;font-weight:700;letter-spacing:-0.684px;">Jobs</div>
<svg style="left:230.5px;top:596px" width="9" height="9" viewBox="0 0 9 9"><path d="M0.5 0.5L8.5 8.5M8.5 0.5L0.5 8.5" stroke="#c0c0c0" stroke-width="1.6"/></svg>
<svg style="left:982px;top:601px" width="18" height="8" viewBox="0 0 18 8"><rect x="0.8" y="0.8" width="16.4" height="6.4" rx="1.8" fill="none" stroke="#87919a" stroke-width="1.6"/><rect x="0.8" y="0.8" width="16.4" height="3.2" rx="1.5" fill="#87919a"/></svg>
<svg style="left:1005px;top:593px" width="17" height="16" viewBox="0 0 17 16"><rect x="0.8" y="0.8" width="15.4" height="14.4" rx="1.2" fill="none" stroke="#87919a" stroke-width="1.6"/><rect x="0.8" y="0.8" width="15.4" height="3.2" rx="1" fill="#87919a"/></svg>
<div style="left:12px;top:640px;width:1022px;height:1px;background:#d3d7da"></div>
<div class="t" style="left:27.40px;top:621.29px;font-family:'Liberation Sans';font-size:13.6px;line-height:16px;color:#939393;font-weight:700;letter-spacing:-0.041px;">E:/R files/</div>
<svg style="left:94px;top:621px" width="16" height="13" viewBox="0 0 16 13"><path d="M1 12C2 6 5.5 4.5 9.5 4.5V1L15 6L9.5 11V7.5C5.5 7.5 3 9 1 12Z" fill="none" stroke="#c4c9ce" stroke-width="0.9"/></svg>
<svg style="left:1002px;top:616px" width="26" height="24" viewBox="0 0 26 24"><path d="M23 1L13 12" stroke="#c8cdd2" stroke-width="1.3"/><path d="M13 11L16 14L9 22C6 22.5 3 21.5 1 20L6 16Z" fill="#eef1f3" stroke="#c8cdd2" stroke-width="0.9"/></svg>
<div style="left:12px;top:641px;width:1022px;height:430px;background:#fff"></div>
<div style="left:1016px;top:641px;width:17px;height:430px;background:#f0f0f0"></div>
<svg style="left:1020px;top:647px" width="9" height="5" viewBox="0 0 9 5"><path d="M0 5H9L4.5 0Z" fill="#505050"/></svg>
<div style="left:1018px;top:1037px;width:13px;height:18px;background:#c1c1c1"></div>
<svg style="left:1020px;top:1060px" width="9" height="5" viewBox="0 0 9 5"><path d="M0 0H9L4.5 5Z" fill="#a3a3a3"/></svg>
<div class="t" style="left:20.00px;top:643.05px;font-family:'Liberation Mono';font-size:16.73px;line-height:20px;color:#0000ff;">&gt;</div>
<div class="t" style="left:20.00px;top:662.05px;font-family:'Liberation Mono';font-size:16.73px;line-height:20px;color:#0000ff;">&gt; #HYPOTHESIS 4 - add Before &amp; After tags</div>
<div class="t" style="left:20.00px;top:681.05px;font-family:'Liberation Mono';font-size:16.73px;line-height:20px;color:#0000ff;">&gt;</div>
<div class="t" style="left:20.00px;top:700.05px;font-family:'Liberation Mono';font-size:16.73px;line-height:20px;color:#0000ff;">&gt; irus_data$communications &lt;- 0</div>
<div class="t" style="left:20.00px;top:719.05px;font-family:'Liberation Mono';font-size:16.73px;line-height:20px;color:#0000ff;">&gt; irus_data$communications &lt;- NA</div>
<div class="t" style="left:20.00px;top:738.05px;font-family:'Liberation Mono';font-size:16.73px;line-height:20px;color:#0000ff;">&gt; attach(irus_data)</div>
<div class="t" style="left:20.00px;top:757.05px;font-family:'Liberation Mono';font-size:16.73px;line-height:20px;color:#0000ff;">&gt; irus_data$communications[Date &gt; as.Date(&quot;2020-01-30&quot;) &amp; Date &lt; as.Date(&quot;2020-02-14&quot;)] &lt;-</div>
<div class="t" style="left:20.00px;top:776.05px;font-family:'Liberation Mono';font-size:16.73px;line-height:20px;color:#0000ff;">+   &quot;Before&quot;</div>
<div class="t" style="left:20.00px;top:795.05px;font-family:'Liberation Mono';font-size:16.73px;line-height:20px;color:#0000ff;">&gt; irus_data$communications[Date &gt; as.Date(&quot;2020-02-14&quot;) &amp; Date &lt; as.Date(&quot;2020-02-28&quot;)] &lt;-</div>
<div class="t" style="left:20.00px;top:814.05px;font-family:'Liberation Mono';font-size:16.73px;line-height:20px;color:#0000ff;">+   &quot;After&quot;</div>
<div class="t" style="left:20.00px;top:833.05px;font-family:'Liberation Mono';font-size:16.73px;line-height:20px;color:#0000ff;">&gt; detach(irus_data)</div>
<div class="t" style="left:20.00px;top:852.05px;font-family:'Liberation Mono';font-size:16.73px;line-height:20px;color:#0000ff;">&gt; cs[1,1]</div>
<div class="t" style="left:20.00px;top:871.05px;font-family:'Liberation Mono';font-size:16.73px;line-height:20px;color:#000;">[1] &quot;2020-02-05 02:39:37&quot;</div>
<div class="t" style="left:20.00px;top:890.05px;font-family:'Liberation Mono';font-size:16.73px;line-height:20px;color:#0000ff;">&gt; View(cs)</div>
<div class="t" style="left:20.00px;top:909.05px;font-family:'Liberation Mono';font-size:16.73px;line-height:20px;color:#0000ff;">&gt; cs[1,1:10]</div>
<div class="t" style="left:20.00px;top:928.05px;font-family:'Liberation Mono';font-size:16.73px;line-height:20px;color:#000;">            StartDate             EndDate     Status Progress Duration (in seconds) Finished</div>
<div class="t" style="left:20.00px;top:947.05px;font-family:'Liberation Mono';font-size:16.73px;line-height:20px;color:#000;">1 2020-02-05 02:39:37 2020-02-05 02:53:21 IP Address      100                   824     True</div>
<div class="t" style="left:20.00px;top:966.05px;font-family:'Liberation Mono';font-size:16.73px;line-height:20px;color:#000;">         RecordedDate        ResponseId DistributionChannel UserLanguage</div>
<div class="t" style="left:20.00px;top:985.05px;font-family:'Liberation Mono';font-size:16.73px;line-height:20px;color:#000;">1 2020-02-05 02:53:22 R_1Nb2vOpLWj1hcwa           anonymous        EN-GB</div>
<div class="t" style="left:20.00px;top:1004.05px;font-family:'Liberation Mono';font-size:16.73px;line-height:20px;color:#0000ff;">&gt; cs[1,254]</div>
<div class="t" style="left:20.00px;top:1023.05px;font-family:'Liberation Mono';font-size:16.73px;line-height:20px;color:#000;">[1] 20.8</div>
<div class="t" style="left:20.00px;top:1042.05px;font-family:'Liberation Mono';font-size:16.73px;line-height:20px;color:#0000ff;">&gt;</div>
<div style="left:40px;top:1042px;width:3px;height:19px;background:#c6c6c6"></div>
<div style="left:1044px;top:84px;width:867px;height:358px;background:#f2f6f7;border:1px solid #d3d7da;border-radius:4px 4px 0 0"></div>
<div style="left:1045px;top:85px;width:865px;height:28px;background:#e6e8ea;border-radius:3px 3px 0 0"></div>
<div style="left:1045px;top:113px;width:865px;height:1px;background:#d3d7da"></div>
<div style="left:1044px;top:84px;width:107px;height:30px;background:#f2f6f7;border:1px solid #d3d7da;border-bottom:none;border-radius:4px 4px 0 0"></div>
<div style="left:1151px;top:85px;width:70px;height:28px;background:#e8e9ec;border-radius:3px 3px 0 0"></div>
<div style="left:1221px;top:86px;width:1px;height:27px;background:#d3d7da"></div>
<div style="left:1222px;top:85px;width:102px;height:28px;background:#e8e9ec;border-radius:3px 3px 0 0"></div>
<div style="left:1324px;top:86px;width:1px;height:27px;background:#d3d7da"></div>
<div style="left:1325px;top:85px;width:42px;height:28px;background:#e8e9ec;border-radius:3px 3px 0 0"></div>
<div style="left:1367px;top:86px;width:1px;height:27px;background:#d3d7da"></div>
<div class="t" style="left:1056.00px;top:92.99px;font-family:'Liberation Sans';font-size:13.6px;line-height:16px;color:#000;font-weight:700;letter-spacing:-0.009px;">Environment</div>
<div class="t" style="left:1162.00px;top:92.99px;font-family:'Liberation Sans';font-size:13.6px;line-height:16px;color:#000;font-weight:700;letter-spacing:0.094px;">History</div>
<div class="t" style="left:1232.50px;top:92.99px;font-family:'Liberation Sans';font-size:13.6px;line-height:16px;color:#000;font-weight:700;letter-spacing:-0.257px;">Connections</div>
<div class="t" style="left:1335.00px;top:92.99px;font-family:'Liberation Sans';font-size:13.6px;line-height:16px;color:#000;font-weight:700;letter-spacing:0.536px;">Git</div>
<svg style="left:1858.5px;top:101.5px" width="18" height="8" viewBox="0 0 18 8"><rect x="0.8" y="0.8" width="16.4" height="6.4" rx="1.8" fill="none" stroke="#87919a" stroke-width="1.6"/><rect x="0.8" y="0.8" width="16.4" height="3.2" rx="1.5" fill="#87919a"/></svg>
<svg style="left:1881.5px;top:93.5px" width="17" height="16" viewBox="0 0 17 16"><rect x="0.8" y="0.8" width="15.4" height="14.4" rx="1.2" fill="none" stroke="#87919a" stroke-width="1.6"/><rect x="0.8" y="0.8" width="15.4" height="3.2" rx="1" fill="#87919a"/></svg>
<div style="left:1045px;top:140px;width:865px;height:1px;background:#d3d7da"></div>
<svg style="left:1051px;top:119px" width="28" height="19" viewBox="0 0 28 19"><path d="M2 4.5H8L9.5 2.5H15V15H2Z" fill="#f6f6f6" stroke="#d2aa3e" stroke-width="0.9"/><path d="M4 6H14V15H4Z" fill="#e6e6e6"/><path d="M0.5 9H14.5L18.5 17.5H3Z" fill="#e8c25a" stroke="#c9a23a" stroke-width="0.8"/><path d="M13 9.5C14 5 17 4 21 4V1.5L26 5.5L21 9.5V7C17.5 7 15 7.5 13 9.5Z" fill="#1fb17f"/></svg>
<svg style="left:1085px;top:119px" width="19" height="19" viewBox="0 0 19 19"><rect x="1.8" y="1.8" width="15.4" height="16" rx="1.5" fill="#76acdf" stroke="#6aa3da" stroke-width="1.4"/><rect x="3.5" y="2.5" width="12" height="6.5" fill="#fff"/><rect x="5" y="11" width="9" height="7" fill="#fff"/><rect x="6.5" y="12.5" width="2.2" height="5.5" fill="#6aa3da"/></svg>
<div style="left:1112px;top:119px;width:1px;height:17px;background:#d3d7da"></div>
<svg style="left:1121px;top:119px" width="26" height="17" viewBox="0 0 26 17"><rect x="1.5" y="3.5" width="16" height="12" fill="#fff" stroke="#b8bfc6"/><path d="M1.5 7.5H17.5M1.5 11.5H17.5M6.5 3.5V15.5M12 3.5V15.5" stroke="#c9cfd5" stroke-width="0.9"/><rect x="1.5" y="3.5" width="16" height="2" fill="#cdd3d9"/><path d="M10 9C11 4.5 14 3.5 18 3.5V1L23.5 5L18 9V6.5C14.5 6.5 12 7 10 9Z" fill="#1fb17f"/></svg>
<div class="t" style="left:1149.00px;top:121.29px;font-family:'Liberation Sans';font-size:13.6px;line-height:16px;color:#000;letter-spacing:0.132px;">Import Dataset</div>
<svg style="left:1246px;top:128px" width="6.6" height="3.6" viewBox="0 0 6.6 3.6"><path d="M0 0H6.6L3.3 3.6Z" fill="#000"/></svg>
<div style="left:1263px;top:119px;width:1px;height:17px;background:#d3d7da"></div>
<svg style="left:1270px;top:115px" width="24" height="23" viewBox="0 0 24 23"><ellipse cx="13" cy="20.3" rx="7" ry="1.6" fill="#b9bdc2" opacity="0.8"/><path d="M21.5 2L14 10.5" stroke="#c9534f" stroke-width="2.6" stroke-linecap="round"/><path d="M10.5 8.5L17.5 14.5Q14 20.5 6 20.5Q2.5 19 3 15.5Z" fill="#dcb465" stroke="#b58a3c" stroke-width="0.6"/><path d="M6.5 12.5L13.5 18.5M9 10.5L15.5 16" stroke="#9c7430" stroke-width="1"/></svg>
<svg style="left:1798px;top:121px" width="15" height="13" viewBox="0 0 15 13"><path d="M0 1H15M0 4.5H15M0 8H15M0 11.5H15" stroke="#a2aab2" stroke-width="1.2"/></svg>
<div class="t" style="left:1821.00px;top:121.29px;font-family:'Liberation Sans';font-size:13.6px;line-height:16px;color:#000;letter-spacing:-0.164px;">List</div>
<svg style="left:1846.5px;top:128px" width="6.6" height="3.6" viewBox="0 0 6.6 3.6"><path d="M0 0H6.6L3.3 3.6Z" fill="#000"/></svg>
<div style="left:1864px;top:119px;width:1px;height:17px;background:#d3d7da"></div>
<svg style="left:1872px;top:115px" width="20" height="22" viewBox="0 0 20 22"><path d="M14.5 5.6A7 7 0 1 0 16.2 14.3" fill="none" stroke="#a9b2bc" stroke-width="4.8"/><path d="M14.5 5.6A7 7 0 1 0 16.2 14.3" fill="none" stroke="#e6eef9" stroke-width="3"/><path d="M11.5 9.8L19 10.3V2.2Z" fill="#e6eef9" stroke="#a9b2bc" stroke-width="0.9" stroke-linejoin="round"/></svg>
<svg style="left:1897.5px;top:126px" width="6" height="3.6" viewBox="0 0 6 3.6"><path d="M0 0H6L3.0 3.6Z" fill="#000"/></svg>
<div style="left:1045px;top:170px;width:865px;height:1px;background:#d3d7da"></div>
<svg style="left:1054px;top:146px" width="20" height="20" viewBox="0 0 20 20"><rect x="7" y="1" width="9" height="11" rx="1.5" fill="#b26ccc"/><rect x="8" y="8" width="11" height="11" rx="1.5" fill="#5b8fe0"/><rect x="1" y="5" width="11" height="11" rx="1.5" fill="#a9c67c"/></svg>
<div class="t" style="left:1080.00px;top:150.79px;font-family:'Liberation Sans';font-size:13.6px;line-height:16px;color:#000;letter-spacing:0.034px;">Global Environment</div>
<svg style="left:1206px;top:158px" width="6.6" height="3.6" viewBox="0 0 6.6 3.6"><path d="M0 0H6.6L3.3 3.6Z" fill="#000"/></svg>
<div style="left:1747px;top:147px;width:151px;height:22px;background:#fff;border:1px solid #d3d7da;border-radius:4px"></div>
<svg style="left:1755px;top:150px" width="18" height="18" viewBox="0 0 18 18"><circle cx="6.5" cy="6.5" r="4.8" fill="none" stroke="#a7afb6" stroke-width="2.2"/><path d="M10 10L15.5 15.5" stroke="#a7afb6" stroke-width="2.8"/></svg>
<div class="t" style="left:1051.50px;top:173.85px;font-family:'Liberation Mono';font-size:16.73px;line-height:20px;color:#000;">Data</div>
<div style="left:1045px;top:196px;width:850px;height:1px;background:#d3d7da"></div>
<div style="left:0;top:0;width:1922px;height:1082px;clip-path:inset(197px 29px 641px 1045px)">
<div style="left:1045px;top:197px;width:850px;height:245px;background:#fff"></div>
<div style="left:1286px;top:197px;width:1px;height:245px;background:#dcdfe1"></div>
<div style="left:1045px;top:222px;width:850px;height:1px;background:#dcdfe1"></div>
<svg style="left:1051px;top:201px" width="16" height="16" viewBox="0 0 16 16"><circle cx="7.4" cy="7.4" r="7" fill="#8cb8e4" stroke="#6b9cd0" stroke-width="0.9"/><path d="M6.1 3.2L10.4 7.4L6.1 11.6Z" fill="#eef4fb"/></svg>
<div class="t" style="left:1071.00px;top:200.05px;font-family:'Liberation Mono';font-size:16.73px;line-height:20px;color:#000;">BSCS</div>
<div class="t" style="left:1288.00px;top:200.05px;font-family:'Liberation Mono';font-size:16.73px;line-height:20px;color:#000;">88 obs. of 13 variables</div>
<svg style="left:1870px;top:202px" width="19" height="15" viewBox="0 0 19 15"><rect x="0.5" y="0.5" width="18" height="14" rx="1.5" fill="#fff" stroke="#b9c0c7"/><rect x="1" y="1" width="17" height="2.2" fill="#bfe0f3"/><path d="M6.5 3V14.5M12.5 3V14.5M0.5 7H18.5M0.5 10.8H18.5" stroke="#cfd5db" stroke-width="0.9"/></svg>
<div style="left:1045px;top:248px;width:850px;height:1px;background:#dcdfe1"></div>
<svg style="left:1051px;top:227px" width="16" height="16" viewBox="0 0 16 16"><circle cx="7.4" cy="7.4" r="7" fill="#8cb8e4" stroke="#6b9cd0" stroke-width="0.9"/><path d="M6.1 3.2L10.4 7.4L6.1 11.6Z" fill="#eef4fb"/></svg>
<div class="t" style="left:1071.00px;top:226.05px;font-family:'Liberation Mono';font-size:16.73px;line-height:20px;color:#000;">cs</div>
<div class="t" style="left:1288.00px;top:226.05px;font-family:'Liberation Mono';font-size:16.73px;line-height:20px;color:#000;">88 obs. of 312 variables</div>
<svg style="left:1870px;top:228px" width="19" height="15" viewBox="0 0 19 15"><rect x="0.5" y="0.5" width="18" height="14" rx="1.5" fill="#fff" stroke="#b9c0c7"/><rect x="1" y="1" width="17" height="2.2" fill="#bfe0f3"/><path d="M6.5 3V14.5M12.5 3V14.5M0.5 7H18.5M0.5 10.8H18.5" stroke="#cfd5db" stroke-width="0.9"/></svg>
<div style="left:1045px;top:274px;width:850px;height:1px;background:#dcdfe1"></div>
<svg style="left:1051px;top:253px" width="16" height="16" viewBox="0 0 16 16"><circle cx="7.4" cy="7.4" r="7" fill="#8cb8e4" stroke="#6b9cd0" stroke-width="0.9"/><path d="M6.1 3.2L10.4 7.4L6.1 11.6Z" fill="#eef4fb"/></svg>
<div class="t" style="left:1071.00px;top:252.05px;font-family:'Liberation Mono';font-size:16.73px;line-height:20px;color:#000;">EAI</div>
<div class="t" style="left:1288.00px;top:252.05px;font-family:'Liberation Mono';font-size:16.73px;line-height:20px;color:#000;">88 obs. of 24 variables</div>
<svg style="left:1870px;top:254px" width="19" height="15" viewBox="0 0 19 15"><rect x="0.5" y="0.5" width="18" height="14" rx="1.5" fill="#fff" stroke="#b9c0c7"/><rect x="1" y="1" width="17" height="2.2" fill="#bfe0f3"/><path d="M6.5 3V14.5M12.5 3V14.5M0.5 7H18.5M0.5 10.8H18.5" stroke="#cfd5db" stroke-width="0.9"/></svg>
<div style="left:1045px;top:300px;width:850px;height:1px;background:#dcdfe1"></div>
<svg style="left:1051px;top:279px" width="16" height="16" viewBox="0 0 16 16"><circle cx="7.4" cy="7.4" r="7" fill="#8cb8e4" stroke="#6b9cd0" stroke-width="0.9"/><path d="M6.1 3.2L10.4 7.4L6.1 11.6Z" fill="#eef4fb"/></svg>
<div class="t" style="left:1071.00px;top:278.05px;font-family:'Liberation Mono';font-size:16.73px;line-height:20px;color:#000;">EAI_subscales</div>
<div class="t" style="left:1288.00px;top:278.05px;font-family:'Liberation Mono';font-size:16.73px;line-height:20px;color:#000;">88 obs. of 12 variables</div>
<svg style="left:1870px;top:280px" width="19" height="15" viewBox="0 0 19 15"><rect x="0.5" y="0.5" width="18" height="14" rx="1.5" fill="#fff" stroke="#b9c0c7"/><rect x="1" y="1" width="17" height="2.2" fill="#bfe0f3"/><path d="M6.5 3V14.5M12.5 3V14.5M0.5 7H18.5M0.5 10.8H18.5" stroke="#cfd5db" stroke-width="0.9"/></svg>
<div style="left:1045px;top:326px;width:850px;height:1px;background:#dcdfe1"></div>
<svg style="left:1051px;top:305px" width="16" height="16" viewBox="0 0 16 16"><circle cx="7.4" cy="7.4" r="7" fill="#8cb8e4" stroke="#6b9cd0" stroke-width="0.9"/><path d="M6.1 3.2L10.4 7.4L6.1 11.6Z" fill="#eef4fb"/></svg>
<div class="t" style="left:1071.00px;top:304.05px;font-family:'Liberation Mono';font-size:16.73px;line-height:20px;color:#000;">external_temp</div>
<div class="t" style="left:1288.00px;top:304.05px;font-family:'Liberation Mono';font-size:16.73px;line-height:20px;color:#000;">54 obs. of 2 variables</div>
<svg style="left:1870px;top:306px" width="19" height="15" viewBox="0 0 19 15"><rect x="0.5" y="0.5" width="18" height="14" rx="1.5" fill="#fff" stroke="#b9c0c7"/><rect x="1" y="1" width="17" height="2.2" fill="#bfe0f3"/><path d="M6.5 3V14.5M12.5 3V14.5M0.5 7H18.5M0.5 10.8H18.5" stroke="#cfd5db" stroke-width="0.9"/></svg>
<div style="left:1045px;top:352px;width:850px;height:1px;background:#dcdfe1"></div>
<svg style="left:1051px;top:331px" width="16" height="16" viewBox="0 0 16 16"><circle cx="7.4" cy="7.4" r="7" fill="#8cb8e4" stroke="#6b9cd0" stroke-width="0.9"/><path d="M6.1 3.2L10.4 7.4L6.1 11.6Z" fill="#eef4fb"/></svg>
<div class="t" style="left:1071.00px;top:330.05px;font-family:'Liberation Mono';font-size:16.73px;line-height:20px;color:#000;">irus_data</div>
<div class="t" style="left:1288.00px;top:330.05px;font-family:'Liberation Mono';font-size:16.73px;line-height:20px;color:#000;">708622 obs. of 26 variables</div>
<svg style="left:1870px;top:332px" width="19" height="15" viewBox="0 0 19 15"><rect x="0.5" y="0.5" width="18" height="14" rx="1.5" fill="#fff" stroke="#b9c0c7"/><rect x="1" y="1" width="17" height="2.2" fill="#bfe0f3"/><path d="M6.5 3V14.5M12.5 3V14.5M0.5 7H18.5M0.5 10.8H18.5" stroke="#cfd5db" stroke-width="0.9"/></svg>
<div style="left:1045px;top:378px;width:850px;height:1px;background:#dcdfe1"></div>
<svg style="left:1051px;top:357px" width="16" height="16" viewBox="0 0 16 16"><circle cx="7.4" cy="7.4" r="7" fill="#8cb8e4" stroke="#6b9cd0" stroke-width="0.9"/><path d="M6.1 3.2L10.4 7.4L6.1 11.6Z" fill="#eef4fb"/></svg>
<div class="t" style="left:1071.00px;top:356.05px;font-family:'Liberation Mono';font-size:16.73px;line-height:20px;color:#000;">likelyPEB</div>
<div class="t" style="left:1288.00px;top:356.05px;font-family:'Liberation Mono';font-size:16.73px;line-height:20px;color:#000;">88 obs. of 22 variables</div>
<svg style="left:1870px;top:358px" width="19" height="15" viewBox="0 0 19 15"><rect x="0.5" y="0.5" width="18" height="14" rx="1.5" fill="#fff" stroke="#b9c0c7"/><rect x="1" y="1" width="17" height="2.2" fill="#bfe0f3"/><path d="M6.5 3V14.5M12.5 3V14.5M0.5 7H18.5M0.5 10.8H18.5" stroke="#cfd5db" stroke-width="0.9"/></svg>
<div style="left:1045px;top:404px;width:850px;height:1px;background:#dcdfe1"></div>
<svg style="left:1051px;top:383px" width="16" height="16" viewBox="0 0 16 16"><circle cx="7.4" cy="7.4" r="7" fill="#8cb8e4" stroke="#6b9cd0" stroke-width="0.9"/><path d="M6.1 3.2L10.4 7.4L6.1 11.6Z" fill="#eef4fb"/></svg>
<div class="t" style="left:1071.00px;top:382.05px;font-family:'Liberation Mono';font-size:16.73px;line-height:20px;color:#000;">moral_ascoop</div>
<div class="t" style="left:1288.00px;top:382.05px;font-family:'Liberation Mono';font-size:16.73px;line-height:20px;color:#000;">88 obs. of 7 variables</div>
<svg style="left:1870px;top:384px" width="19" height="15" viewBox="0 0 19 15"><rect x="0.5" y="0.5" width="18" height="14" rx="1.5" fill="#fff" stroke="#b9c0c7"/><rect x="1" y="1" width="17" height="2.2" fill="#bfe0f3"/><path d="M6.5 3V14.5M12.5 3V14.5M0.5 7H18.5M0.5 10.8H18.5" stroke="#cfd5db" stroke-width="0.9"/></svg>
<div style="left:1045px;top:430px;width:850px;height:1px;background:#dcdfe1"></div>
<svg style="left:1051px;top:409px" width="16" height="16" viewBox="0 0 16 16"><circle cx="7.4" cy="7.4" r="7" fill="#8cb8e4" stroke="#6b9cd0" stroke-width="0.9"/><path d="M6.1 3.2L10.4 7.4L6.1 11.6Z" fill="#eef4fb"/></svg>
<div class="t" style="left:1071.00px;top:408.05px;font-family:'Liberation Mono';font-size:16.73px;line-height:20px;color:#000;">moral_found</div>
<div class="t" style="left:1288.00px;top:408.05px;font-family:'Liberation Mono';font-size:16.73px;line-height:20px;color:#000;">88 obs. of 7 variables</div>
<svg style="left:1870px;top:410px" width="19" height="15" viewBox="0 0 19 15"><rect x="0.5" y="0.5" width="18" height="14" rx="1.5" fill="#fff" stroke="#b9c0c7"/><rect x="1" y="1" width="17" height="2.2" fill="#bfe0f3"/><path d="M6.5 3V14.5M12.5 3V14.5M0.5 7H18.5M0.5 10.8H18.5" stroke="#cfd5db" stroke-width="0.9"/></svg>
<div style="left:1045px;top:456px;width:850px;height:1px;background:#dcdfe1"></div>
<svg style="left:1051px;top:435px" width="16" height="16" viewBox="0 0 16 16"><circle cx="7.4" cy="7.4" r="7" fill="#8cb8e4" stroke="#6b9cd0" stroke-width="0.9"/><path d="M6.1 3.2L10.4 7.4L6.1 11.6Z" fill="#eef4fb"/></svg>
<div class="t" style="left:1071.00px;top:434.05px;font-family:'Liberation Mono';font-size:16.73px;line-height:20px;color:#000;">NEP</div>
<div class="t" style="left:1288.00px;top:434.05px;font-family:'Liberation Mono';font-size:16.73px;line-height:20px;color:#000;">88 obs. of 15 variables</div>
<svg style="left:1870px;top:436px" width="19" height="15" viewBox="0 0 19 15"><rect x="0.5" y="0.5" width="18" height="14" rx="1.5" fill="#fff" stroke="#b9c0c7"/><rect x="1" y="1" width="17" height="2.2" fill="#bfe0f3"/><path d="M6.5 3V14.5M12.5 3V14.5M0.5 7H18.5M0.5 10.8H18.5" stroke="#cfd5db" stroke-width="0.9"/></svg>
</div>
<div style="left:1893px;top:171px;width:17px;height:270px;background:#f0f0f0"></div>
<svg style="left:1897.5px;top:177px" width="9" height="5" viewBox="0 0 9 5"><path d="M0 5H9L4.5 0Z" fill="#a3a3a3"/></svg>
<div style="left:1896px;top:188px;width:12px;height:156px;background:#c9c9c9"></div>
<svg style="left:1897px;top:431px" width="9" height="5" viewBox="0 0 9 5"><path d="M0 0H9L4.5 5Z" fill="#7a7a7a"/></svg>
<div style="left:1044px;top:451px;width:867px;height:621px;background:#f2f6f7;border:1px solid #d3d7da;border-radius:4px 4px 0 0"></div>
<div style="left:1045px;top:452px;width:865px;height:28px;background:#e6e8ea;border-radius:3px 3px 0 0"></div>
<div style="left:1045px;top:480px;width:865px;height:1px;background:#d3d7da"></div>
<div style="left:1046px;top:452px;width:50px;height:28px;background:#e8e9ec;border-radius:3px 3px 0 0"></div>
<div style="left:1096px;top:453px;width:1px;height:27px;background:#d3d7da"></div>
<div style="left:1097px;top:452px;width:55px;height:28px;background:#e8e9ec;border-radius:3px 3px 0 0"></div>
<div style="left:1152px;top:453px;width:1px;height:27px;background:#d3d7da"></div>
<div style="left:1153px;top:452px;width:82px;height:28px;background:#e8e9ec;border-radius:3px 3px 0 0"></div>
<div style="left:1235px;top:453px;width:1px;height:27px;background:#d3d7da"></div>
<div style="left:1235px;top:451px;width:55px;height:30px;background:#f2f6f7;border:1px solid #d3d7da;border-bottom:none;border-radius:4px 4px 0 0"></div>
<div style="left:1290px;top:452px;width:67px;height:28px;background:#e8e9ec;border-radius:3px 3px 0 0"></div>
<div style="left:1357px;top:453px;width:1px;height:27px;background:#d3d7da"></div>
<div class="t" style="left:1056.00px;top:459.99px;font-family:'Liberation Sans';font-size:13.6px;line-height:16px;color:#000;font-weight:700;letter-spacing:-0.497px;">Files</div>
<div class="t" style="left:1108.00px;top:459.99px;font-family:'Liberation Sans';font-size:13.6px;line-height:16px;color:#000;font-weight:700;letter-spacing:-0.247px;">Plots</div>
<div class="t" style="left:1164.40px;top:459.99px;font-family:'Liberation Sans';font-size:13.6px;line-height:16px;color:#000;font-weight:700;letter-spacing:-0.467px;">Packages</div>
<div class="t" style="left:1247.00px;top:459.99px;font-family:'Liberation Sans';font-size:13.6px;line-height:16px;color:#000;font-weight:700;letter-spacing:0.133px;">Help</div>
<div class="t" style="left:1301.00px;top:459.99px;font-family:'Liberation Sans';font-size:13.6px;line-height:16px;color:#000;font-weight:700;letter-spacing:0.068px;">Viewer</div>
<svg style="left:1858.5px;top:468px" width="18" height="8" viewBox="0 0 18 8"><rect x="0.8" y="0.8" width="16.4" height="6.4" rx="1.8" fill="none" stroke="#87919a" stroke-width="1.6"/><rect x="0.8" y="0.8" width="16.4" height="3.2" rx="1.5" fill="#87919a"/></svg>
<svg style="left:1881.5px;top:460px" width="17" height="16" viewBox="0 0 17 16"><rect x="0.8" y="0.8" width="15.4" height="14.4" rx="1.2" fill="none" stroke="#87919a" stroke-width="1.6"/><rect x="0.8" y="0.8" width="15.4" height="3.2" rx="1" fill="#87919a"/></svg>
<div style="left:1045px;top:508px;width:865px;height:1px;background:#d3d7da"></div>
<svg style="left:1053px;top:487px" width="20" height="17" viewBox="0 0 20 17"><path d="M1 8.5L8.5 1V5H19V12H8.5V16Z" fill="#a9d0f0" stroke="#8fbde6" stroke-width="0.8"/></svg>
<svg style="left:1085px;top:487px" width="20" height="17" viewBox="0 0 20 17"><path d="M19 8.5L11.5 1V5H1V12H11.5V16Z" fill="#a9d0f0" stroke="#8fbde6" stroke-width="0.8"/></svg>
<svg style="left:1113px;top:484px" width="23" height="20" viewBox="0 0 23 20"><path d="M2 10L11.5 1.5L21 10" fill="none" stroke="#c9302c" stroke-width="2.4"/><path d="M5 9V19H18V9L11.5 3.5Z" fill="#f4f4f4" stroke="#c8c8c8" stroke-width="0.8"/><rect x="9.5" y="12" width="4" height="7" fill="#b86f2a"/></svg>
<div style="left:1142px;top:486px;width:1px;height:17px;background:#d3d7da"></div>
<svg style="left:1152px;top:487px" width="21" height="17" viewBox="0 0 21 17"><path d="M6.5 15.5V4A2.5 2.5 0 0 1 9 1.5H17A2.5 2.5 0 0 1 19.5 4V15.5Z" fill="#f8fafc" stroke="#a9b6c1"/><path d="M7 6V4A2 2 0 0 1 9 2H17A2 2 0 0 1 19 4V6Z" fill="#cfe5f9"/><path d="M2 14L7.5 8.5" stroke="#8a98a6" stroke-width="3.8" stroke-linecap="round"/><path d="M2 14L7.5 8.5" stroke="#ececf1" stroke-width="2"/><path d="M3.4 6.4H9.9V12.9Z" fill="#ececf1" stroke="#8a98a6" stroke-width="0.9" stroke-linejoin="round"/></svg>
<div style="left:1713px;top:483px;width:152px;height:23px;background:#fff;border:1px solid #d3d7da;border-radius:4px"></div>
<svg style="left:1722px;top:487px" width="18" height="18" viewBox="0 0 18 18"><circle cx="6.5" cy="6.5" r="4.8" fill="none" stroke="#a0a8b0" stroke-width="2.2"/><path d="M10 10L15.5 15.5" stroke="#a0a8b0" stroke-width="2.8"/></svg>
<div class="t" style="left:1749.00px;top:489.29px;font-family:'Liberation Sans';font-size:13.6px;line-height:16px;color:#000;letter-spacing:-0.085px;">replace</div>
<svg style="left:1843px;top:488px" width="15" height="15" viewBox="0 0 15 15"><circle cx="7.5" cy="7.5" r="7" fill="#b4b4b4"/><path d="M4.5 4.5L10.5 10.5M10.5 4.5L4.5 10.5" stroke="#fff" stroke-width="1.6"/></svg>
<div style="left:1876px;top:486px;width:1px;height:17px;background:#d3d7da"></div>
<svg style="left:1884px;top:483px" width="20" height="22" viewBox="0 0 20 22"><path d="M14.5 5.6A7 7 0 1 0 16.2 14.3" fill="none" stroke="#a9b2bc" stroke-width="4.8"/><path d="M14.5 5.6A7 7 0 1 0 16.2 14.3" fill="none" stroke="#e6eef9" stroke-width="3"/><path d="M11.5 9.8L19 10.3V2.2Z" fill="#e6eef9" stroke="#a9b2bc" stroke-width="0.9" stroke-linejoin="round"/></svg>
<div style="left:1045px;top:538px;width:865px;height:1px;background:#d3d7da"></div>
<div class="t" style="left:1052.00px;top:518.29px;font-family:'Liberation Sans';font-size:13.6px;line-height:16px;color:#000;letter-spacing:-0.245px;">R: Replace Values in a Vector</div>
<svg style="left:1232px;top:522px" width="6" height="3.6" viewBox="0 0 6 3.6"><path d="M0 0H6L3.0 3.6Z" fill="#000"/></svg>
<div style="left:1248px;top:512px;width:115px;height:23px;background:#fff;border:1px solid #d3d7da;border-radius:4px"></div>
<div class="t" style="left:1262.00px;top:518.29px;font-family:'Liberation Sans';font-size:13.6px;line-height:16px;color:#8a8d91;letter-spacing:0.032px;">Find in Topic</div>
<div style="left:1045px;top:539px;width:865px;height:532px;background:#fff"></div>
<div style="left:1893px;top:539px;width:17px;height:532px;background:#f0f0f0"></div>
<svg style="left:1897px;top:545px" width="9" height="5" viewBox="0 0 9 5"><path d="M0 5H9L4.5 0Z" fill="#a3a3a3"/></svg>
<div style="left:1895px;top:556px;width:13px;height:356px;background:#c1c1c1"></div>
<svg style="left:1897px;top:1061px" width="9" height="5" viewBox="0 0 9 5"><path d="M0 0H9L4.5 5Z" fill="#505050"/></svg>
<div class="t" style="left:1058.60px;top:551.72px;font-family:'Liberation Sans';font-size:16.667px;line-height:20px;color:#000;letter-spacing:0.035px;">replace {base}</div>
<div class="t" style="right:42.00px;top:551.72px;font-family:'Liberation Sans';font-size:16.667px;line-height:20px;color:#000;letter-spacing:0.021px;">R Documentation</div>
<div class="t" style="left:1055.50px;top:598.60px;font-family:'Liberation Sans';font-size:30px;line-height:36px;color:#000;">Replace Values in a Vector</div>
<div class="t" style="left:1055.50px;top:659.07px;font-family:'Liberation Sans';font-size:19.4px;line-height:23px;color:#585858;font-weight:700;letter-spacing:0.075px;">Description</div>
<div class="t" style="left:1055.50px;top:760.77px;font-family:'Liberation Sans';font-size:19.4px;line-height:23px;color:#585858;font-weight:700;letter-spacing:-0.141px;">Usage</div>
<div class="t" style="left:1055.50px;top:841.77px;font-family:'Liberation Sans';font-size:19.4px;line-height:23px;color:#585858;font-weight:700;letter-spacing:0.016px;">Arguments</div>
<div class="t" style="left:1055.50px;top:1002.27px;font-family:'Liberation Sans';font-size:19.4px;line-height:23px;color:#585858;font-weight:700;letter-spacing:0.066px;">Value</div>
<div class="t" style="left:1055.50px;top:803.06px;font-family:'Liberation Mono';font-size:16.667px;line-height:20px;color:#3a3a3a;">replace(x, list, values)</div>
<div class="t" style="left:1058.30px;top:888.06px;font-family:'Liberation Mono';font-size:16.667px;line-height:20px;color:#3a3a3a;">x</div>
<div class="t" style="left:1137.30px;top:886.72px;font-family:'Liberation Sans';font-size:16.667px;line-height:20px;color:#000;">vector</div>
<div class="t" style="left:1058.30px;top:920.26px;font-family:'Liberation Mono';font-size:16.667px;line-height:20px;color:#3a3a3a;">list</div>
<div class="t" style="left:1137.30px;top:918.92px;font-family:'Liberation Sans';font-size:16.667px;line-height:20px;color:#000;">an index vector</div>
<div class="t" style="left:1058.30px;top:952.46px;font-family:'Liberation Mono';font-size:16.667px;line-height:20px;color:#3a3a3a;">values</div>
<div class="t" style="left:1137.30px;top:951.12px;font-family:'Liberation Sans';font-size:16.667px;line-height:20px;color:#000;">replacement values</div>
<div class="t" style="left:1055.50px;top:1043.72px;font-family:'Liberation Sans';font-size:16.667px;line-height:20px;color:#000;letter-spacing:0.025px;">A vector with the values replaced.</div>
<div class="t" style="left:1055.5px;top:695.52px;font-size:16.667px;line-height:30px;color:#000;white-space:pre"><span style="font-family:'Liberation Mono';color:#3a3a3a">replace</span> replaces the values in <span style="font-family:'Liberation Mono';color:#3a3a3a">x</span> with indices given in <span style="font-family:'Liberation Mono';color:#3a3a3a">list</span> by those given in <span style="font-family:'Liberation Mono';color:#3a3a3a">values</span>. If necessary, the values</div>
<div class="t" style="left:1055.5px;top:716.42px;font-size:16.667px;line-height:30px;color:#000;white-space:pre">in <span style="font-family:'Liberation Mono';color:#3a3a3a">values</span> are recycled.</div>
<div style="left:0px;top:0px;width:1922px;height:1px;background:#7a7a7a"></div>
<div style="left:0px;top:0px;width:1px;height:1082px;background:#707070"></div>
<div style="left:0px;top:1081px;width:1922px;height:1px;background:#6e6e6e"></div>
<div style="left:1919px;top:0px;width:1px;height:1082px;background:#5a5a5a"></div>
<div style="left:1920px;top:0px;width:2px;height:1082px;background:#3c3c3c"></div>
</body></html>
